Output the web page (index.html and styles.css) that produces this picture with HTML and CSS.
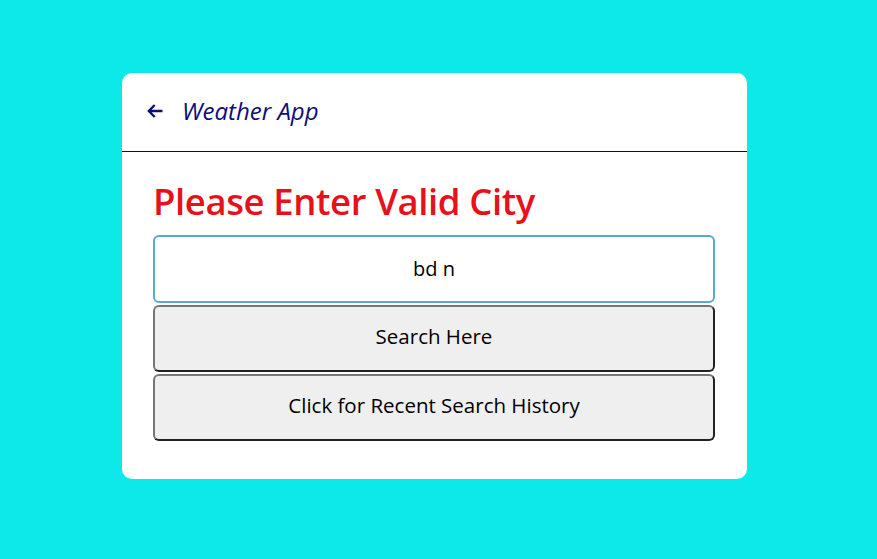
FILE: index.html
```html
<!DOCTYPE html>
<html>
<head>
<meta charset="utf-8">
<link rel="stylesheet" href="styles.css">
</head>
<body>
<div class="card">
  <header class="bar">
    <svg class="back" width="18" height="18" viewBox="0 0 18 18"><path d="M16.5 9H3M8.7 3L2.8 9l5.9 6" fill="none" stroke="#0b0b7a" stroke-width="2.3"/></svg>
    <span class="title">Weather App</span>
  </header>
  <main class="content">
    <h1 class="error">Please Enter Valid City</h1>
    <input class="city" type="text" value="bd n">
    <button class="btn">Search Here</button>
    <button class="btn">Click for Recent Search History</button>
  </main>
</div>
</body>
</html>
```
FILE: styles.css
```css
html, body {
  margin: 0;
  padding: 0;
}
body {
  background: #0de8e8;
  font-family: "Open Sans", sans-serif;
  height: 559px;
  overflow: hidden;
}
.card {
  margin: 73px 0 0 122px;
  width: 625px;
  background: #fff;
  border-radius: 10px;
  box-sizing: border-box;
}
.bar {
  height: 78px;
  border-bottom: 1px solid #111;
  display: flex;
  align-items: center;
  padding-left: 24px;
  gap: 18px;
  box-sizing: content-box;
}
.back {
  display: block;
  margin-top: -2px;
}
.title {
  font-style: italic;
  color: #0b0b7a;
  font-size: 24px;
  font-weight: 500;
  margin-top: -4px;
}
.content {
  padding: 28px 32px 38px 31px;
  display: flex;
  flex-direction: column;
  gap: 2px;
}
.error {
  margin: 0 0 11px 0;
  color: #e8101a;
  font-weight: 600;
  font-size: 36.5px;
  line-height: 42px;
  letter-spacing: -0.4px;
}
.city {
  height: 68px;
  box-sizing: border-box;
  border: 2px solid #5aa8d6;
  border-radius: 6px;
  text-align: center;
  font-family: inherit;
  font-size: 20px;
  font-weight: 500;
  color: #000;
  outline: none;
  margin: 0;
  padding: 0 0 2px 0;
}
.btn {
  height: 67px;
  box-sizing: border-box;
  border: 2px solid #777;
  border-right-color: #222;
  border-bottom-color: #222;
  border-radius: 6px;
  background: #efefef;
  font-family: inherit;
  font-size: 20.5px;
  font-weight: 500;
  color: #000;
  margin: 0;
  padding: 0 0 5px 0;
}
```
